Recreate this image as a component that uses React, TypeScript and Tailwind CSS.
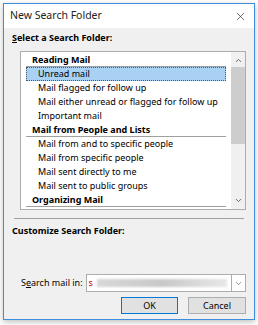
import { X, ChevronUp, ChevronDown } from "lucide-react"

const font = { fontFamily: '"Noto Sans", "Open Sans", sans-serif' }

const Heading = ({ label }: { label: string }) => (
    <div className="h-[14px] leading-[14px] pl-[6px] font-bold text-[9px] text-black border-b border-[#a0a0a0] mx-[5px] -mb-px whitespace-nowrap">
        {label}
    </div>
)

const Item = ({ label, selected }: { label: string; selected?: boolean }) => (
    <div
        className={
            selected
                ? "h-[14px] leading-[12px] mx-[5px] pl-[11px] text-[9px] text-black bg-[#a8d1f4] border border-dotted border-[#555] whitespace-nowrap"
                : "h-[14px] leading-[14px] mx-[5px] pl-[12px] text-[9px] text-black whitespace-nowrap"
        }
    >
        {label}
    </div>
)

const App = () => {
    return (
        <div className="w-[258px] h-[325px] bg-white pt-[3px] pl-[3px]" style={font}>
            <div className="w-[252px] h-[317px] border border-[#3c8ce0] flex flex-col shadow-[0_2px_6px_rgba(0,0,0,0.25)]">
                <div className="h-[24px] bg-white flex items-center justify-between pl-[6px] pr-[7px]">
                    <span className="text-[10.5px] text-[#222]">New Search Folder</span>
                    <X size={13} strokeWidth={1.2} className="text-[#222]" />
                </div>
                <div className="flex-1 bg-[#f0f0f0] flex flex-col px-[8px]">
                    <div className="mt-[3px] h-[14px] leading-[14px] text-[9px] font-bold text-black whitespace-nowrap">
                        <span className="underline">S</span>elect a Search Folder:
                    </div>
                    <div className="mt-[6px] ml-[8px] w-[226px] h-[159px] bg-white border border-[#abadb3] flex">
                        <div className="flex-1 pt-[1px] overflow-hidden">
                            <Heading label="Reading Mail" />
                            <div className="h-px" />
                            <Item label="Unread mail" selected />
                            <Item label="Mail flagged for follow up" />
                            <Item label="Mail either unread or flagged for follow up" />
                            <Item label="Important mail" />
                            <Heading label="Mail from People and Lists" />
                            <div className="h-px" />
                            <Item label="Mail from and to specific people" />
                            <Item label="Mail from specific people" />
                            <Item label="Mail sent directly to me" />
                            <Item label="Mail sent to public groups" />
                            <Heading label="Organizing Mail" />
                        </div>
                        <div className="w-[14px] bg-[#f0f0f0] flex flex-col items-center">
                            <ChevronUp size={9} strokeWidth={2.5} className="text-[#606060] mt-[4px]" />
                            <div className="w-[14px] mt-[2px] h-[77px] bg-[#cdcdcd]" />
                            <div className="flex-1" />
                            <ChevronDown size={9} strokeWidth={2.5} className="text-[#606060] mb-[4px]" />
                        </div>
                    </div>
                    <div className="mt-[8px] ml-[2px] mr-[2px] h-px bg-[#a0a0a0]" />
                    <div className="mt-[5px] h-[14px] leading-[14px] text-[9px] font-bold text-black whitespace-nowrap">
                        Customize Search Folder:
                    </div>
                    <div className="flex-1" />
                    <div className="flex items-center">
                        <span className="ml-[9px] text-[9px] text-black whitespace-nowrap">
                            S<span className="underline">e</span>arch mail in:
                        </span>
                        <div className="ml-[3px] w-[162px] h-[18px] bg-white border border-[#abadb3] flex items-center">
                            <span className="text-[9px] text-[#c00] ml-[2px]">s</span>
                            <div className="ml-[4px] w-[130px] h-[8px] bg-gradient-to-r from-[#d8d8d8] via-[#c8c8c8] to-[#e8e8e8] blur-[1px]" />
                            <div className="flex-1" />
                            <div className="w-[14px] h-[16px] border-l border-[#abadb3] flex items-center justify-center">
                                <ChevronDown size={9} strokeWidth={1.8} className="text-[#606060]" />
                            </div>
                        </div>
                    </div>
                    <div className="flex justify-end gap-[10px] mt-[5px] mb-[5px]">
                        <button className="w-[57px] h-[17px] bg-[#e1e1e1] border border-[#0078d7] text-[9px] text-black leading-none">
                            OK
                        </button>
                        <button className="w-[58px] h-[17px] bg-[#e1e1e1] border border-[#adadad] text-[9px] text-black leading-none">
                            Cancel
                        </button>
                    </div>
                </div>
            </div>
        </div>
    )
}

export default App
